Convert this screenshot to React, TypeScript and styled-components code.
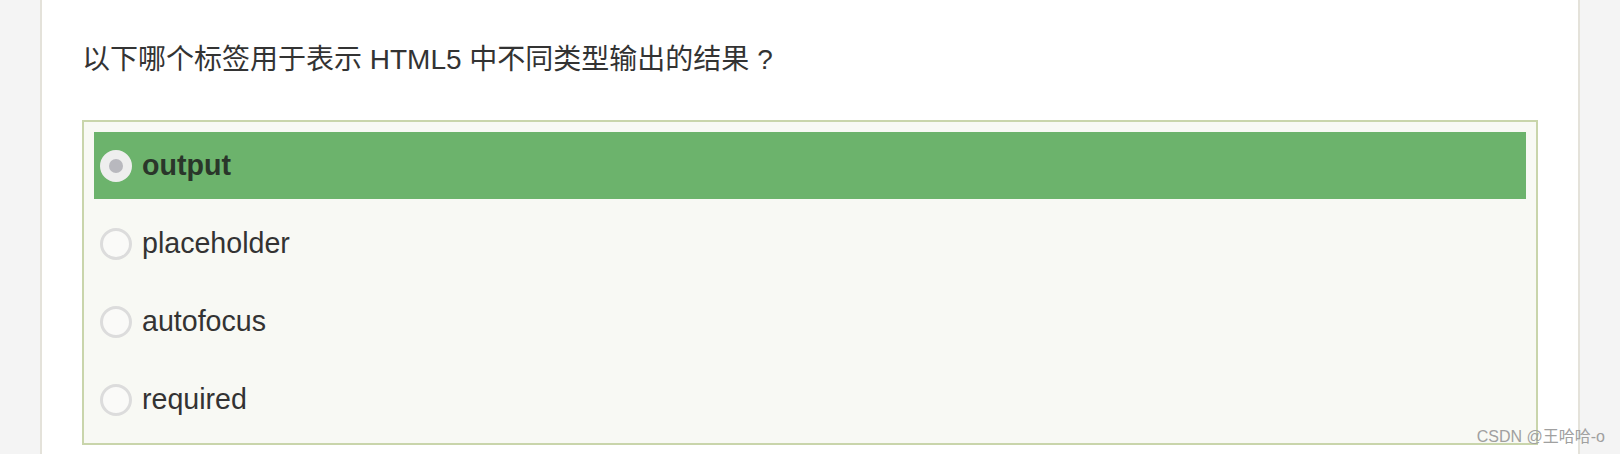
import React from 'react';
import styled, { createGlobalStyle } from 'styled-components';

const GlobalStyle = createGlobalStyle`
  html, body {
    margin: 0;
    padding: 0;
    background: #f4f4f4;
  }
  * {
    box-sizing: border-box;
  }
`;

const Page = styled.div`
  position: relative;
  height: 454px;
  overflow: hidden;
  padding: 0 40px;
  font-family: 'Liberation Sans', 'Noto Sans CJK SC', sans-serif;
  color: #333333;
`;

const Card = styled.div`
  height: 100%;
  background: #ffffff;
  border-left: 2px solid #e4e2da;
  border-right: 2px solid #e4e2da;
  padding: 40px 40px 0 40px;
`;

const Question = styled.h3`
  margin: 0 0 40px;
  font-size: 28px;
  line-height: 40px;
  font-weight: 400;
  color: #333333;
`;

const Options = styled.div`
  display: flex;
  flex-direction: column;
  gap: 11px;
  padding: 10px;
  background: #f8f9f4;
  border: 2px solid #c9d5ab;
`;

const Option = styled.label<{ $selected?: boolean }>`
  display: flex;
  align-items: center;
  gap: 10px;
  height: 67px;
  padding-left: 6px;
  background: ${(p) => (p.$selected ? '#6cb36c' : 'transparent')};
  font-size: 28.6px;
  font-weight: ${(p) => (p.$selected ? 700 : 400)};
  color: ${(p) => (p.$selected ? '#2a362a' : '#333333')};
  cursor: pointer;
`;

const Radio = styled.span<{ $checked?: boolean }>`
  display: flex;
  align-items: center;
  justify-content: center;
  width: 32px;
  height: 32px;
  border-radius: 50%;
  background: ${(p) => (p.$checked ? '#eeeeee' : '#fafaf8')};
  border: 3px solid ${(p) => (p.$checked ? '#eeeeee' : '#dcdcdc')};
  flex-shrink: 0;

  &::after {
    content: '';
    display: ${(p) => (p.$checked ? 'block' : 'none')};
    width: 14px;
    height: 14px;
    border-radius: 50%;
    background: #b8b8be;
  }
`;

const Watermark = styled.div`
  position: absolute;
  right: 15px;
  bottom: 7px;
  font-size: 16px;
  color: #a0a0a0;
  font-family: 'Liberation Sans', 'Noto Sans CJK SC', sans-serif;
`;

const choices = ['output', 'placeholder', 'autofocus', 'required'];

const App = (): JSX.Element => (
  <>
    <GlobalStyle />
    <Page>
      <Card>
        <Question>以下哪个标签用于表示 HTML5 中不同类型输出的结果 ?</Question>
        <Options>
          {choices.map((c, i) => (
            <Option key={c} $selected={i === 0}>
              <Radio $checked={i === 0} />
              {c}
            </Option>
          ))}
        </Options>
      </Card>
      <Watermark>CSDN @王哈哈-o</Watermark>
    </Page>
  </>
);

export default App;
